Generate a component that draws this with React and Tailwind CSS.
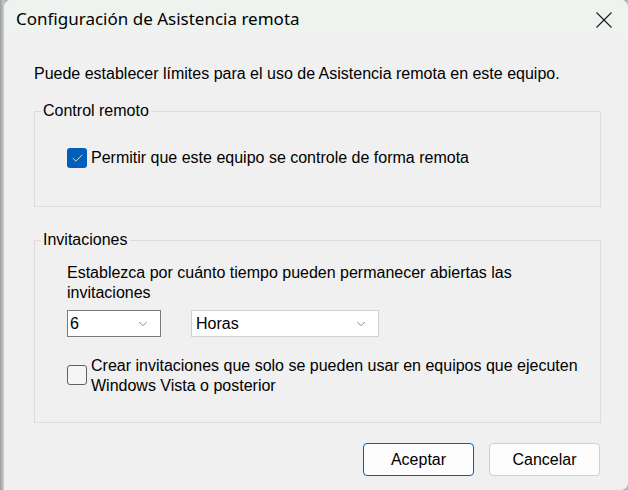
import { Check, ChevronDown } from "lucide-react";

function Select({ value, width, focused }) {
  return (
    <div
      className={`flex h-[27px] items-center justify-between bg-white pl-[2px] pr-[10px] ${width} border ${
        focused ? "border-[#7a7a7a]" : "border-[#d0d0d0]"
      }`}
    >
      <span>{value}</span>
      <ChevronDown className="h-[14px] w-[14px] text-[#606060]" strokeWidth={1.25} />
    </div>
  );
}

export default function App() {
  return (
    <div className="flex h-[490px] w-[628px] overflow-hidden bg-[#b4b4b4]">
      <div className="w-[4px] bg-gradient-to-r from-[#9c9c9c] to-[#cfcfcf]" />
      <div
        className="flex flex-1 flex-col overflow-hidden rounded-tl-[7px] rounded-tr-[7px] rounded-br-[7px] bg-[#f0f0f0] text-[16px] leading-[20px] text-black"
        style={{ fontFamily: '"Liberation Sans", Arial, sans-serif' }}
      >
        {/* Title bar */}
        <div className="flex h-[38px] items-center justify-between bg-[#eef3ef] pl-[12px] pr-[16px]">
          <span className="text-[17px]" style={{ fontFamily: '"Noto Sans", "Open Sans", sans-serif' }}>
            Configuración de Asistencia remota
          </span>
          <svg width="16" height="16" viewBox="0 0 16 16" className="mt-[2px]">
            <path d="M0.5 0.5 L15.5 15.5 M15.5 0.5 L0.5 15.5" stroke="#1a1a1a" strokeWidth="1.1" />
          </svg>
        </div>

        <div className="flex flex-col pl-[30px] pr-[27px] pt-[26px]">
          <p>Puede establecer límites para el uso de Asistencia remota en este equipo.</p>

          {/* Control remoto */}
          <fieldset className="mt-[17px] h-[106px] border border-[#dcdcdc] p-0">
            <legend className="ml-[6px] px-[2px]">Control remoto</legend>
            <label className="ml-[32px] mt-[27px] flex items-center gap-[4px]">
              <span className="flex h-[20px] w-[20px] items-center justify-center rounded-[3px] bg-[#005fb8]">
                <Check className="h-[13px] w-[13px] text-white" strokeWidth={1.5} />
              </span>
              <span>Permitir que este equipo se controle de forma remota</span>
            </label>
          </fieldset>

          {/* Invitaciones */}
          <fieldset className="mt-[23px] h-[193px] border border-[#dcdcdc] p-0">
            <legend className="ml-[6px] px-[2px]">Invitaciones</legend>
            <div className="pl-[32px] pr-[20px]">
              <p className="mt-[13px]">
                Establezca por cuánto tiempo pueden permanecer abiertas las
                <br />
                invitaciones
              </p>
              <div className="mt-[7px] flex gap-[30px]">
                <Select value="6" width="w-[94px]" focused />
                <Select value="Horas" width="w-[188px] pl-[4px]" />
              </div>
              <label className="mt-[19px] flex items-start gap-[4px]">
                <span className="mt-[9px] h-[20px] w-[20px] shrink-0 rounded-[3px] border border-[#5f5f5f] bg-[#f5f5f5]" />
                <span>
                  Crear invitaciones que solo se pueden usar en equipos que ejecuten
                  <br />
                  Windows Vista o posterior
                </span>
              </label>
            </div>
          </fieldset>

          {/* Buttons */}
          <div className="mt-[20px] flex justify-end gap-[15px] pr-[1px]">
            <button className="h-[33px] w-[111px] rounded-[4px] border border-[#005fb8] bg-[#fdfdfd]">
              Aceptar
            </button>
            <button className="h-[33px] w-[111px] rounded-[4px] border border-[#d0d0d0] bg-[#fdfdfd]">
              Cancelar
            </button>
          </div>
        </div>
      </div>
    </div>
  );
}
